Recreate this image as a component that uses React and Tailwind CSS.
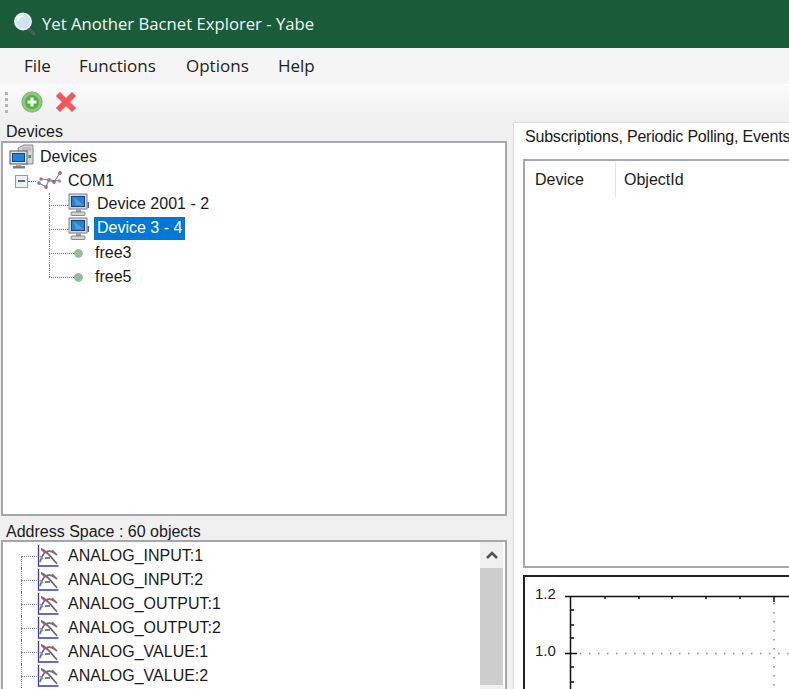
const sans = 'font-["Liberation_Sans",sans-serif]';

const addressItems = ['ANALOG_INPUT:1', 'ANALOG_INPUT:2', 'ANALOG_OUTPUT:1', 'ANALOG_OUTPUT:2', 'ANALOG_VALUE:1', 'ANALOG_VALUE:2'];

function Magnifier() {
  return (
    <svg width="24" height="24" viewBox="0 0 24 24" className="shrink-0">
      <line x1="15" y1="16" x2="21" y2="22" stroke="#4f5a58" strokeWidth="3" strokeLinecap="round" />
      <circle cx="10" cy="9.500" r="8" fill="#cfe3f2" stroke="#e8eef0" strokeWidth="2" />
      <path d="M5 9a5 5 0 0 1 5-5" stroke="#fff" strokeWidth="2" fill="none" />
    </svg>
  );
}

function AddIcon() {
  return (
    <svg width="22" height="22" viewBox="0 0 22 22">
      <circle cx="11" cy="11" r="10.200" fill="#8cc97c" stroke="#7f9f78" strokeWidth="0.800" />
      <circle cx="11" cy="11" r="7" fill="#58ad48" />
      <path d="M11 6.500v9M6.500 11h9" stroke="#f2faee" strokeWidth="3.200" />
    </svg>
  );
}

function RemoveIcon() {
  return (
    <svg width="22" height="22" viewBox="0 0 22 22">
      <path d="M1 5l4-4 6 6 6-6 4 4-6 6 6 6-4 4-6-6-6 6-4-4 6-6z" fill="#f2575c" stroke="#f08a8a" strokeWidth="0.500" />
    </svg>
  );
}

function Monitor() {
  return (
    <svg width="22" height="24" viewBox="0 0 22 24" className="shrink-0">
      <rect x="1" y="1" width="18" height="15" fill="#d5d9dc" stroke="#7b8286" />
      <rect x="3" y="3" width="14" height="11" fill="#1d3f8f" />
      <rect x="4" y="4" width="12" height="9" fill="#1f86d6" />
      <path d="M6 4.500l10 8H8z" fill="#4ea0c9" />
      <rect x="8" y="16" width="5" height="3" fill="#9fa4a8" />
      <rect x="3" y="19" width="14" height="3.500" rx="1" fill="#d2d5d8" stroke="#6f7478" strokeWidth="0.800" />
      <rect x="19.500" y="9" width="1.500" height="6" fill="#6a6258" />
    </svg>
  );
}

function DevicesIcon() {
  return (
    <svg width="26" height="26" viewBox="0 0 26 26" className="shrink-0">
      <path d="M9 4l6-3h9v19H11z" fill="#d2d4d6" stroke="#85898c" />
      <path d="M13 4h9M13 6h9" stroke="#9a9da0" strokeWidth="0.800" />
      <rect x="1" y="7" width="17" height="13" fill="#dfe3e6" stroke="#555b60" />
      <rect x="3" y="9" width="13" height="9" fill="#1d3f8f" />
      <rect x="4" y="10" width="11" height="7" fill="#1f86d6" />
      <rect x="19.500" y="11" width="2.500" height="3" fill="#2f9d3f" />
      <rect x="7" y="20" width="5" height="2" fill="#a9aeb2" />
      <rect x="4" y="22" width="12" height="2.500" fill="#7d8286" />
    </svg>
  );
}

function NetworkIcon() {
  return (
    <svg width="26" height="20" viewBox="0 0 26 20" className="shrink-0">
      <path d="M3 12l7 4 3-7 5 2 6-9M5 8l8 1 10 1" stroke="#7f8488" strokeWidth="1.100" fill="none" />
      <circle cx="3" cy="12" r="1.900" fill="#7d8f9c" />
      <circle cx="5" cy="8" r="1.700" fill="#b86a70" />
      <circle cx="10" cy="16" r="1.900" fill="#b5656a" />
      <circle cx="13" cy="9" r="2" fill="#6f93a8" />
      <circle cx="18" cy="11" r="1.900" fill="#b5656a" />
      <circle cx="24" cy="2" r="1.900" fill="#b5656a" />
      <circle cx="23.500" cy="10" r="1.700" fill="#8a9aa5" />
    </svg>
  );
}

function ChartIcon() {
  return (
    <svg width="22" height="24" viewBox="0 0 22 24" className="shrink-0">
      <path d="M1.500 1v21h20" stroke="#3a3ac8" strokeWidth="1.300" fill="none" />
      <path d="M3 18C6 8 11 3 20 11" stroke="#6d7074" strokeWidth="1.800" fill="none" />
      <path d="M4 5c5 1 11 9 16 15" stroke="#6d7074" strokeWidth="1.800" fill="none" />
      <path d="M3 12l3 3" stroke="#9a9da0" strokeWidth="1.300" />
      <path d="M5 6l3 3M15 6l3 3" stroke="#b85a60" strokeWidth="1.500" />
      <path d="M8 14h5" stroke="#3a50c0" strokeWidth="1.500" />
    </svg>
  );
}

function Dot() {
  return (
    <span className="w-[9px] h-[9px] rounded-full bg-[#8fc08f] border border-[#a9b9a9] shrink-0" />
  );
}

function Expander() {
  return (
    <span className="w-[13px] h-[13px] border border-[#9a9a9a] bg-[#f0f0f0] flex items-center justify-center shrink-0">
      <span className="w-[7px] h-[2px] bg-[#4a6a9a]" />
    </span>
  );
}

// one dotted tree guide: vertical line plus the branch going to the right
function Guide({ last, first, width }) {
  return (
    <span className="relative self-stretch shrink-0" style={{ width }}>
      <span className={`absolute left-0 border-l border-dotted border-[#808080] ${first ? 'top-3' : 'top-0'} ${last ? 'h-3' : 'bottom-0'}`} />
      <span className="absolute left-0 right-0 top-3 border-t border-dotted border-[#808080]" />
    </span>
  );
}

function DeviceRow({ label, selected }) {
  return (
    <div className="flex items-center h-6 pl-[46px]">
      <Guide width={19} />
      <Monitor />
      <span className={`ml-[4px] mb-[2px] px-[3px] h-[23px] leading-[22px] ${selected ? 'bg-[#0078d7] text-[#ffffff]' : ''}`}>{label}</span>
    </div>
  );
}

function FreeRow({ label, last }) {
  return (
    <div className="flex items-center h-6 pl-[46px]">
      <Guide width={25} last={last} />
      <Dot />
      <span className="ml-[12px]">{label}</span>
    </div>
  );
}

function Chart() {
  const topTicks = [605, 639, 672, 706, 740];
  const leftTicks = [610, 625, 638, 667, 682];
  return (
    <svg width="266" height="114" viewBox="523 575 266 114" className="block">
      <rect x="524" y="576" width="270" height="120" fill="#fff" stroke="#222" strokeWidth="2" />
      <path d="M565 596.500H789M570.500 596V689M565 653.500H577M774 596V602" stroke="#111" strokeWidth="1.500" fill="none" />
      {topTicks.map((x) => (
        <line key={x} x1={x} x2={x} y1="596" y2="599" stroke="#111" strokeWidth="1.500" />
      ))}
      {leftTicks.map((y) => (
        <line key={y} x1="570" x2="574" y1={y} y2={y} stroke="#111" strokeWidth="1.500" />
      ))}
      <line x1="580" x2="789" y1="653.500" y2="653.500" stroke="#888" strokeWidth="1.500" strokeDasharray="1.500 7.500" />
      <line x1="774" x2="774" y1="603" y2="689" stroke="#888" strokeWidth="1.500" strokeDasharray="1.500 7.500" />
      <text x="535" y="599" fontSize="15" fontFamily="Liberation Sans, sans-serif" fill="#222">1.2</text>
      <text x="535" y="656" fontSize="15" fontFamily="Liberation Sans, sans-serif" fill="#222">1.0</text>
    </svg>
  );
}

export default function App() {
  return (
    <div className={`w-[789px] h-[689px] overflow-hidden flex flex-col bg-[#f0f0f0] text-[#1a1a1a] text-[16px] ${sans}`}>
      {/* Title bar */}
      <div className="h-[48px] shrink-0 bg-[#1a5c3a] flex items-center pl-[13px] gap-[5px] font-['Open_Sans',sans-serif] text-[#f2f6f3] text-[16.700px]">
        <Magnifier />
        <span>Yet Another Bacnet Explorer - Yabe</span>
      </div>

      {/* Menu */}
      <div className="h-[36px] shrink-0 bg-[#f5f5f5] flex items-center pl-[24px] font-['Open_Sans',sans-serif] text-[17px] text-[#222]">
        <span className="w-[55px]">File</span>
        <span className="w-[107px]">Functions</span>
        <span className="w-[92px]">Options</span>
        <span>Help</span>
      </div>

      {/* Toolbar */}
      <div className="h-[38px] shrink-0 bg-gradient-to-b from-[#fbfbfb] to-[#efefef] flex items-center pl-[5px] pb-[2px]">
        <span className="flex flex-col gap-[3px] mr-[13px]">
          <span className="w-[3px] h-[3px] bg-[#b5b5b5]" />
          <span className="w-[3px] h-[3px] bg-[#b5b5b5]" />
          <span className="w-[3px] h-[3px] bg-[#b5b5b5]" />
          <span className="w-[3px] h-[3px] bg-[#b5b5b5]" />
        </span>
        <AddIcon />
        <span className="ml-[12px]"><RemoveIcon /></span>
      </div>

      {/* Body */}
      <div className="flex-1 flex min-h-0">
        {/* Left column */}
        <div className="w-[513px] shrink-0 pl-[1px] pr-[6px] flex flex-col">
          <div className="h-[19px] leading-[20px] pl-[5px]">Devices</div>
          <div className="h-[375px] shrink-0 bg-white border-2 border-[#a4a8ac] pt-[2px]">
            <div className="flex items-center h-6 pl-[6px]">
              <DevicesIcon />
              <span className="ml-[5px]">Devices</span>
            </div>
            <div className="flex items-center h-6 pl-[12px]">
              <Expander />
              <span className="w-[8px] border-t border-dotted border-[#808080]" />
              <NetworkIcon />
              <span className="ml-[6px]">COM1</span>
            </div>
            <DeviceRow label="Device 2001 - 2" />
            <DeviceRow label="Device 3 - 4" selected />
            <FreeRow label="free3" />
            <FreeRow label="free5" last />
          </div>
          <div className="h-[24px] pt-[6px] leading-[19px] pl-[5px] shrink-0">Address Space : 60 objects</div>
          <div className="flex-1 min-h-0 bg-white border-2 border-b-0 border-[#a4a8ac] flex overflow-hidden">
            <div className="flex-1 pt-[2px]">
              {addressItems.map((item, i) => (
                <div key={item} className="flex items-center h-6 pl-[18px]">
                  <Guide width={16} first={i === 0} />
                  <ChartIcon />
                  <span className="ml-[9px]">{item}</span>
                </div>
              ))}
            </div>
            <div className="w-[23px] mr-[2px] shrink-0 bg-[#f0f0f0] flex flex-col">
              <div className="h-[26px] flex items-center justify-center">
                <svg width="12" height="8" viewBox="0 0 12 8">
                  <path d="M1 7l5-5 5 5" stroke="#505050" strokeWidth="2.500" fill="none" />
                </svg>
              </div>
              <div className="h-[117px] bg-[#cdcdcd]" />
            </div>
          </div>
        </div>

        {/* Right column */}
        <div className="flex-1 min-w-0 bg-white border-l border-t border-[#dcdcdc] flex flex-col pl-[9px]">
          <div className="h-[37px] pt-[4px] leading-[20px] pl-[2px] whitespace-nowrap tracking-[-0.2px]">Subscriptions, Periodic Polling, Events</div>
          <div className="h-[409px] shrink-0 border-2 border-r-0 border-[#a4a8ac] -mr-px">
            <div className="flex h-[37px] items-center">
              <span className="w-[91px] h-[35px] leading-[35px] pl-[10px] border-r border-[#e5e5e5]">Device</span>
              <span className="pl-[8px]">ObjectId</span>
            </div>
          </div>
          <div className="mt-[7px]">
            <Chart />
          </div>
        </div>
      </div>
    </div>
  );
}
